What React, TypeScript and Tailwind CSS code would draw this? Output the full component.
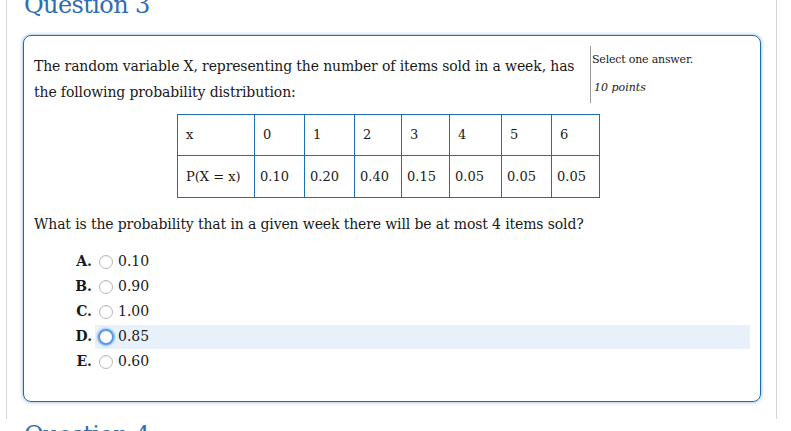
const xs = ["0", "1", "2", "3", "4", "5", "6"];
const ps = ["0.10", "0.20", "0.40", "0.15", "0.05", "0.05", "0.05"];
const colW = [77, 50, 50, 47, 48, 52, 50, 48];

const options = [
  { label: "A.", value: "0.10" },
  { label: "B.", value: "0.90" },
  { label: "C.", value: "1.00" },
  { label: "D.", value: "0.85", focused: true },
  { label: "E.", value: "0.60" },
];

function Radio({ focused }: { focused?: boolean }) {
  if (focused) {
    return (
      <span className="inline-block w-[16px] h-[16px] rounded-full bg-white border-[2px] border-[#5b9ae6] shadow-[0_0_2px_1px_#8fbcf0]" />
    );
  }
  return (
    <span className="inline-block w-[14px] h-[14px] rounded-full bg-white border border-[#b8b8b8] shadow-[inset_0_1px_1px_rgba(0,0,0,0.08)]" />
  );
}

export default function App() {
  return (
    <div
      className="w-[791px] h-[431px] overflow-hidden bg-white text-[#222]"
      style={{ fontFamily: '"DejaVu Serif", Georgia, serif' }}
    >
      <div className="ml-[6px] w-[771px] h-[431px] border-x border-[#d4d4d4] pl-[16px] pr-[15px]">
        <h2 className="mt-[-12px] h-[47px] text-[24px] leading-[34px] text-[#2f6db5] pl-[1px] tracking-[-0.6px]">
          Question 3
        </h2>

        <div className="h-[367px] rounded-[8px] border border-[#2468ad] shadow-[0_0_3px_1px_rgba(80,140,210,0.45)] pl-[10px] pr-[10px] pt-[10px]">
          <div className="flex">
            <p className="w-[556px] text-[14px] leading-[26px] pt-[7px] tracking-[-0.13px] text-[#1a1a1a]">
              The random variable X, representing the number of items sold in a week, has the following probability distribution:
            </p>
            <div className="h-[57px] border-l border-[#999] pl-[1px]">
              <div className="text-[11px] leading-[14px] pt-[7px] tracking-[-0.2px] text-[#222]">Select one answer.</div>
              <div className="text-[11px] italic leading-[14px] pt-[14px] pl-[2px] text-[#222]">10 points</div>
            </div>
          </div>

          <div className="flex justify-start pl-[143px] mt-[9px]">
            <table className="border-collapse text-[13px] text-[#1a1a1a]">
              <tbody>
                <tr className="h-[41px]">
                  <td className="border border-[#1e6fb0] pl-[8px]" style={{ width: colW[0] }}>x</td>
                  {xs.map((x, i) => (
                    <td key={x} className="border border-[#1e6fb0] pl-[8px]" style={{ width: colW[i + 1] }}>
                      {x}
                    </td>
                  ))}
                </tr>
                <tr className="h-[42px]">
                  <td className="border border-[#1e6fb0] pl-[8px]">P(X = x)</td>
                  {ps.map((p, i) => (
                    <td key={i} className="border border-[#1e6fb0] pl-[5px]">
                      {p}
                    </td>
                  ))}
                </tr>
              </tbody>
            </table>
          </div>

          <p className="mt-[16px] text-[14px] leading-[20px] tracking-[-0.13px] text-[#1a1a1a]">
            What is the probability that in a given week there will be at most 4 items sold?
          </p>

          <div className="mt-[15px] flex flex-col">
            {options.map((o) => (
              <div key={o.label} className="flex items-center h-[25px]">
                <span className="w-[61px] text-right font-bold text-[14px] text-[#1a1a1a] pr-[3px]">{o.label}</span>
                <div
                  className={
                    "flex items-center h-[24px] flex-1 " + (o.focused ? "bg-[#e8f0fa]" : "")
                  }
                >
                  <span className="w-[22px] flex justify-center">
                    <Radio focused={o.focused} />
                  </span>
                  <span className="pl-[1px] text-[14px] text-[#1a1a1a]">{o.value}</span>
                </div>
              </div>
            ))}
          </div>
        </div>

        <h2 className="mt-[16px] text-[24px] leading-[34px] text-[#2f6db5] pl-[1px] tracking-[-0.6px]">Question 4</h2>
      </div>
    </div>
  );
}
